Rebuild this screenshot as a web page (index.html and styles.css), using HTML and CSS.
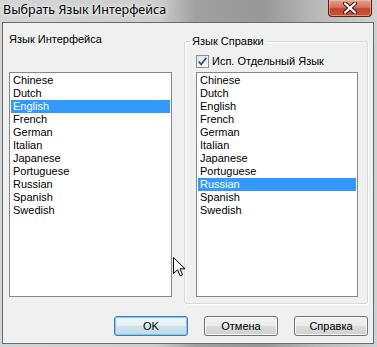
FILE: index.html
```html
<!DOCTYPE html>
<html lang="ru">
<head>
    <meta charset="UTF-8">
    <title>Выбрать Язык Интерфейса</title>
    <link rel="stylesheet" href="styles.css">
</head>
<body>
    <div class="window">
        <div class="titlebar">
            <span class="title">Выбрать Язык Интерфейса</span>
            <div class="close">
                <svg width="16" height="12" viewBox="0 0 16 12">
                    <path d="M3 1.5 L13 10.5 M13 1.5 L3 10.5" fill="none" stroke="#3a1a14" stroke-width="4.2" stroke-linecap="round"/>
                    <path d="M3 1.5 L13 10.5 M13 1.5 L3 10.5" fill="none" stroke="#ffffff" stroke-width="2.2" stroke-linecap="round"/>
                </svg>
            </div>
        </div>

        <div class="client">
            <div class="panes">
                <div class="pane">
                    <div class="label">Язык Интерфейса</div>
                    <ul class="listbox">
                        <li>Chinese</li>
                        <li>Dutch</li>
                        <li class="selected">English</li>
                        <li>French</li>
                        <li>German</li>
                        <li>Italian</li>
                        <li>Japanese</li>
                        <li>Portuguese</li>
                        <li>Russian</li>
                        <li>Spanish</li>
                        <li>Swedish</li>
                    </ul>
                </div>

                <fieldset class="group">
                    <legend>Язык Справки</legend>
                    <div class="group-body">
                        <label class="check">
                            <span class="box">
                                <svg width="11" height="11" viewBox="0 0 11 11">
                                    <path d="M1.8 5.6 L4.2 8.4 L9.4 1.8" fill="none" stroke="#3b4c86" stroke-width="1.7"/>
                                </svg>
                            </span>
                            Исп. Отдельный Язык
                        </label>
                        <ul class="listbox">
                            <li>Chinese</li>
                            <li>Dutch</li>
                            <li>English</li>
                            <li>French</li>
                            <li>German</li>
                            <li>Italian</li>
                            <li>Japanese</li>
                            <li>Portuguese</li>
                            <li class="selected">Russian</li>
                            <li>Spanish</li>
                            <li>Swedish</li>
                        </ul>
                    </div>
                </fieldset>
            </div>

            <div class="buttons">
                <button class="btn default">OK</button>
                <button class="btn">Отмена</button>
                <button class="btn">Справка</button>
            </div>
        </div>

        <!-- mouse pointer over the dialog -->
        <svg class="cursor" width="13" height="20" viewBox="0 0 13 20">
            <path d="M0.5 0.5 L0.5 16.5 L4.5 12.8 L7.2 18.8 L9.6 17.8 L7 11.8 L12 11.8 Z" fill="#fff" stroke="#000" stroke-width="1" stroke-linejoin="miter"/>
        </svg>
    </div>
</body>
</html>
```

FILE: styles.css
```css
body {
    margin: 0;
    padding: 0;
    font-family: "Liberation Sans", Arial, sans-serif;
    font-size: 11px;
    background: #c4c4c4;
}

.window {
    position: relative;
    width: 377px;
    height: 347px;
    display: flex;
    flex-direction: column;
    background: linear-gradient(90deg, #d3d4d5 0%, #cdcdce 42%, #a0a0a0 52%, #989898 70%, #b9b9b9 84%, #cfd0d1 100%);
}

.titlebar {
    height: 22px;
    display: flex;
    align-items: flex-start;
    padding-left: 3px;
}
.title {
    font-family: "Noto Sans", "Open Sans", sans-serif;
    font-size: 12.5px;
    line-height: 20px;
    color: #000;
    text-shadow: 0 0 6px #fff, 0 0 3px #eee;
}
.close {
    margin-left: auto;
    margin-right: 5px;
    width: 42px;
    height: 16px;
    border: 1px solid #5a2018;
    border-top: none;
    border-radius: 0 0 4px 4px;
    background: linear-gradient(#e3a090 0%, #d4745f 45%, #c4432a 55%, #c8553b 100%);
    box-shadow: inset 0 0 0 1px rgba(255, 200, 180, 0.5);
    display: flex;
    align-items: center;
    justify-content: center;
}

.client {
    flex: 1;
    margin: 0 3px 3px 2px;
    border: 1px solid #6a6a6a;
    background: #f0f0f0;
    padding: 10px 5px 7px 6px;
    display: flex;
    flex-direction: column;
}

.panes {
    display: grid;
    grid-template-columns: 163px 184px;
    column-gap: 12px;
    height: 271px;
}
.label {
    line-height: 13px;
    height: 13px;
}
.pane .listbox {
    margin-top: 26px;
}

.listbox {
    list-style: none;
    margin: 0;
    padding: 1px;
    height: 225px;
    box-sizing: border-box;
    border: 1px solid #828790;
    background: white;
}
.listbox li {
    line-height: 13px;
    height: 13px;
    padding-left: 2px;
    white-space: nowrap;
}
.listbox .selected {
    background: #3399ff;
    color: white;
}

.group {
    margin: 2px 0 0 0;
    padding: 0;
    min-width: 0;
    border: 1px solid #d5d8dc;
    border-radius: 3px;
    box-shadow: inset 1px 1px 0 #fff, 1px 1px 0 #fff;
}
.group legend {
    margin-left: 5px;
    padding: 0 2px;
    line-height: 13px;
}
.group-body {
    padding: 0 9px 0 11px;
}
.check {
    display: flex;
    align-items: center;
    height: 13px;
    margin-top: 7px;
    margin-bottom: 4px;
    gap: 3px;
    line-height: 13px;
}
.box {
    width: 11px;
    height: 11px;
    border: 1px solid #8e8f8f;
    background: linear-gradient(135deg, #e4e4e4, #fbfbfb);
    display: flex;
}
.group .listbox {
    width: 162px;
}

.buttons {
    display: flex;
    justify-content: flex-end;
    gap: 16px;
    margin-top: 12px;
}
.btn {
    width: 74px;
    height: 20px;
    padding: 0;
    font-family: "Liberation Sans", Arial, sans-serif;
    font-size: 11px;
    color: #000;
    border: 1px solid #707070;
    border-radius: 3px;
    background: linear-gradient(#f2f2f2 0%, #ebebeb 50%, #dddddd 51%, #cfcfcf 100%);
    box-shadow: inset 0 0 0 1px #fbfbfb;
}
.btn.default {
    border-color: #3c7fb1;
    background: linear-gradient(#eef6fa 0%, #e3eef4 50%, #cfe2ec 51%, #c3d9e5 100%);
    box-shadow: inset 0 0 0 1px #7ccbee;
}

.cursor {
    position: absolute;
    left: 173px;
    top: 257px;
}
```
